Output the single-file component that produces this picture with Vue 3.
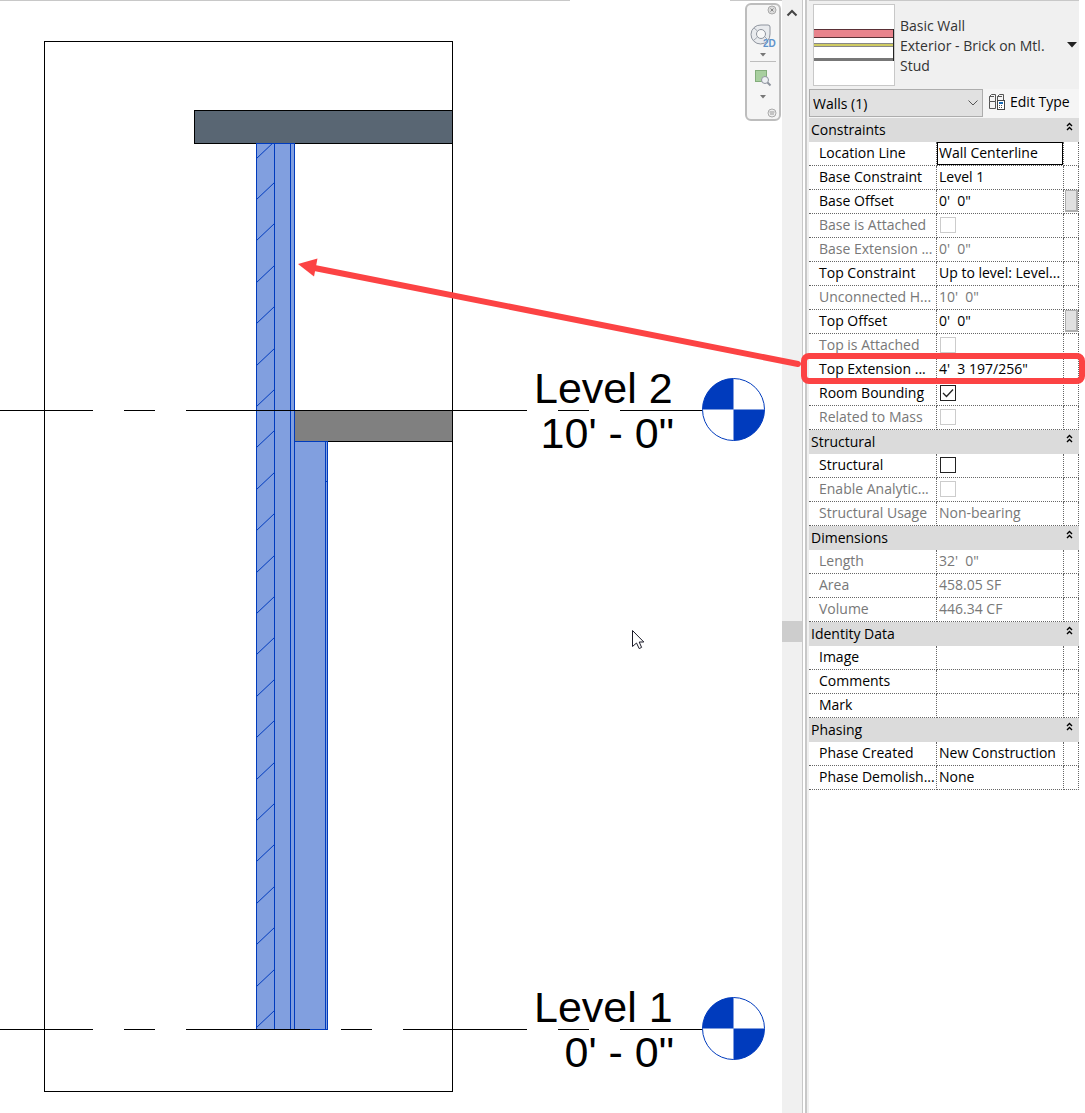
<script setup>
import { ref } from 'vue'

const filter = ref('walls')

const sections = ref([
  {
    title: 'Constraints',
    rows: [
      { id: 'location', label: 'Location Line', value: 'Wall Centerline', type: 'text', active: true },
      { id: 'base', label: 'Base Constraint', value: 'Level 1' },
      { id: 'base-offset', label: 'Base Offset', value: '0\'  0"', type: 'text', picker: true },
      { id: 'base-attached', label: 'Base is Attached', value: false, type: 'check', disabled: true },
      { id: 'base-ext', label: 'Base Extension ...', value: '0\'  0"', disabled: true },
      { id: 'top', label: 'Top Constraint', value: 'Up to level: Level...' },
      { id: 'height', label: 'Unconnected H...', value: '10\'  0"', disabled: true },
      { id: 'top-offset', label: 'Top Offset', value: '0\'  0"', type: 'text', picker: true },
      { id: 'top-attached', label: 'Top is Attached', value: false, type: 'check', disabled: true },
      { id: 'top-ext', label: 'Top Extension ...', value: '4\'  3 197/256"', marked: true },
      { id: 'room', label: 'Room Bounding', value: true, type: 'check' },
      { id: 'mass', label: 'Related to Mass', value: false, type: 'check', disabled: true }
    ]
  },
  {
    title: 'Structural',
    rows: [
      { id: 'structural', label: 'Structural', value: false, type: 'check' },
      { id: 'analytical', label: 'Enable Analytic...', value: false, type: 'check', disabled: true },
      { id: 'usage', label: 'Structural Usage', value: 'Non-bearing', disabled: true }
    ]
  },
  {
    title: 'Dimensions',
    rows: [
      { id: 'length', label: 'Length', value: '32\'  0"', disabled: true },
      { id: 'area', label: 'Area', value: '458.05 SF', disabled: true },
      { id: 'volume', label: 'Volume', value: '446.34 CF', disabled: true }
    ]
  },
  {
    title: 'Identity Data',
    rows: [
      { id: 'image', label: 'Image', value: '' },
      { id: 'comments', label: 'Comments', value: '', type: 'text' },
      { id: 'mark', label: 'Mark', value: '', type: 'text' }
    ]
  },
  {
    title: 'Phasing',
    rows: [
      { id: 'created', label: 'Phase Created', value: 'New Construction' },
      { id: 'demolished', label: 'Phase Demolish...', value: 'None' }
    ]
  }
])

const levels = [
  { name: 'Level 2', elevation: '10\' - 0"', y: 410 },
  { name: 'Level 1', elevation: '0\' - 0"', y: 1029 }
]

// brick hatch, one stroke every 41.4 units down the wall
const hatch = Array.from({ length: 22 }, (_, i) => Math.round(140.6 + i * 41.4))
</script>

<template>
  <div class="workspace">
    <main class="view">
      <svg class="drawing" viewBox="0 0 782 1113">
        <defs>
          <clipPath id="brick"><rect x="256" y="143" width="19" height="886" /></clipPath>
        </defs>
        <path d="M0 .5H570M730 .5H782" stroke="#c8c8c8" />

        <!-- wall layers -->
        <rect x="256" y="143" width="39" height="886" fill="#819fdf" />
        <rect x="295" y="441" width="33" height="588" fill="#819fdf" />
        <g clip-path="url(#brick)" stroke="#003bbd">
          <line v-for="y in hatch" :key="y" x1="256" :y1="y + 18" x2="275" :y2="y" />
        </g>
        <path
          d="M256.5 143V1029M274.5 143V1029M290.5 143V1029M294.5 143V1029M325.5 441V1029M327.5 441V1029"
          stroke="#003bbd"
        />

        <!-- roof and floor -->
        <rect x="194.5" y="110.5" width="258" height="33" fill="#596673" stroke="#000" />
        <path d="M256 143.5H295" stroke="#003bbd" />
        <rect x="295" y="410.5" width="157.5" height="31" fill="#808080" />
        <path d="M328 441.5H452M295 410.5H452" stroke="#000" />
        <path d="M294.5 410V441.5H328M310 1029.5H328M326 481.5H328" fill="none" stroke="#003bbd" />

        <!-- crop region -->
        <rect x="44.5" y="41.5" width="408" height="1050" fill="none" stroke="#000" />

        <g v-for="level in levels" :key="level.name">
          <path
            :transform="`translate(0 ${level.y})`"
            d="M0 .5H93M124 .5H155M186 .5H310M341 .5H372M403 .5H527M558 .5H589M620 .5H702"
            stroke="#000"
          />
          <g :transform="`translate(733.5 ${level.y - 0.5})`">
            <circle r="31" fill="#fff" stroke="#003bbd" />
            <path d="M0 0V-31A31 31 0 0 0-31 0ZM0 0V31A31 31 0 0 0 31 0Z" fill="#003bbd" />
          </g>
          <text class="level-text" x="534" :y="level.y - 7">{{ level.name }}</text>
          <text class="level-text" x="674" :y="level.y + 38" text-anchor="end">{{ level.elevation }}</text>
        </g>

        <!-- cursor -->
        <path
          d="M632.5 630.5V646.5L636.5 643L639.2 648.6L641.6 647.4L639.2 642H643.8Z"
          fill="#fff"
          stroke="#1b1b28"
        />

        <!-- callout arrow -->
        <path d="M312 267.500L798 364" stroke="#fc4344" stroke-width="6" stroke-linecap="round" />
        <path d="M298 264L317.500 258.500L314 276.500Z" fill="#fc4344" />
      </svg>

      <nav class="navbar" aria-label="Navigation bar">
        <button type="button" aria-label="Close">
          <svg width="10" height="10" viewBox="0 0 10 10">
            <circle cx="5" cy="5" r="4" fill="#ddd" stroke="#aaa" />
            <path d="M3.500 3.500l3 3m0-3l-3 3" stroke="#888" />
          </svg>
        </button>
        <button type="button" class="wheel" aria-label="Steering wheel 2D">
          <svg width="26" height="26" viewBox="0 0 26 26">
            <path d="M11 2H18Q20 2 20 4V11A9.500 9.500 0 1 1 11 2Z" fill="#e9ebee" stroke="#8e949e" />
            <circle cx="11" cy="11" r="4.500" fill="#f8f8f8" stroke="#8e949e" />
            <path d="M4 5l3.500 3M15 14l2 2M4 17l3.500-3" stroke="#a5aab3" />
            <text class="wheel-text" x="13" y="24">2D</text>
          </svg>
          <svg width="6" height="4" viewBox="0 0 6 4"><path d="M0 0H6L3 3.500Z" fill="#777" /></svg>
        </button>
        <button type="button" class="zoom" aria-label="Zoom region">
          <svg width="18" height="18" viewBox="0 0 18 18">
            <rect x="1.500" y="1.500" width="11" height="11" fill="#a8cf9f" stroke="#83ad7b" />
            <circle cx="11" cy="11" r="3.500" fill="#eef1f4" stroke="#8e949e" />
            <path d="M13.500 13.500L16.500 16.500" stroke="#8e949e" stroke-width="2" />
          </svg>
          <svg width="6" height="4" viewBox="0 0 6 4"><path d="M0 0H6L3 3.500Z" fill="#777" /></svg>
        </button>
        <button type="button" aria-label="Options">
          <svg width="10" height="10" viewBox="0 0 10 10">
            <circle cx="5" cy="5" r="4" fill="#eee" stroke="#aaa" />
            <path d="M2.500 4H7.500M3 6H7" stroke="#999" />
          </svg>
        </button>
      </nav>
    </main>

    <div class="scrollbar">
      <button type="button" class="scroll-up" aria-label="Scroll up">
        <svg width="12" height="8" viewBox="0 0 12 8">
          <path d="M1.500 6.500L6 2L10.500 6.500" fill="none" stroke="#444" stroke-width="2" />
        </svg>
      </button>
      <div class="track-before"></div>
      <div class="thumb"></div>
      <div class="track-after"></div>
    </div>
    <div class="splitter"></div>

    <aside class="properties">
      <button type="button" class="type-selector">
        <svg class="preview" width="82" height="82" viewBox="0 0 82 82">
          <rect x=".5" y=".5" width="81" height="81" fill="#fff" stroke="#c8c8c8" />
          <rect x="1" y="25" width="80" height="9" fill="#e8838c" />
          <path d="M1 25.500H81M1 33.500H81" stroke="#5a3036" />
          <path d="M1 39.500H81M1 42.500H81" stroke="#888" />
          <path d="M1 41H81" stroke="#cfcb62" stroke-width="2" />
          <path d="M1 55.500H81" stroke="#777" stroke-width="3" />
          <path d="M80.500 25V57" stroke="#222" />
        </svg>
        <span class="type-name">Basic Wall<br />Exterior - Brick on Mtl.<br />Stud</span>
        <svg width="10" height="6" viewBox="0 0 10 6"><path d="M0 0H10L5 5.500Z" fill="#222" /></svg>
      </button>

      <div class="filter-row">
        <div class="filter">
          <select v-model="filter" aria-label="Element filter">
            <option value="walls">Walls (1)</option>
          </select>
          <svg class="chevron" width="12" height="8" viewBox="0 0 12 8">
            <path d="M1.500 1.500L6 6L10.500 1.500" fill="none" stroke="#555" />
          </svg>
        </div>
        <button type="button" class="edit-type">
          <svg width="17" height="17" viewBox="0 0 17 17">
            <path
              d="M2.500 1.500H6.500V8.500H.5V3.500ZM10.500 1.500H14.500V7.500H8.500V3.500ZM.5 8.500V15.500H6.500V8.500M.5 3.500H5M8.500 3.500H13"
              fill="none"
              stroke="#555"
            />
            <rect x="8.500" y="7.500" width="7" height="9" fill="#fff" stroke="#444" />
            <rect x="10" y="9" width="4" height="2" fill="#1769b5" />
            <path d="M10 12.500H14M10 14.500H14" stroke="#555" stroke-dasharray="1 1" />
          </svg>
          Edit Type
        </button>
      </div>

      <table class="grid">
        <colgroup>
          <col class="col-name" />
          <col />
          <col class="col-picker" />
        </colgroup>
        <tbody v-for="section in sections" :key="section.title">
          <tr class="section">
            <th colspan="2" scope="rowgroup">{{ section.title }}</th>
            <td>
              <button type="button" :aria-label="`Collapse ${section.title}`">
                <svg width="7" height="9" viewBox="0 0 7 9">
                  <path d="M1 4L3.500 1.500L6 4M1 8L3.500 5.500L6 8" fill="none" stroke="#000" stroke-width="1.400" />
                </svg>
              </button>
            </td>
          </tr>
          <tr v-for="row in section.rows" :key="row.id" :class="{ disabled: row.disabled, marked: row.marked }">
            <th scope="row">
              <label v-if="row.type" :for="row.id">{{ row.label }}</label>
              <template v-else>{{ row.label }}</template>
              <span v-if="row.marked" class="marker"></span>
            </th>
            <td>
              <input
                v-if="row.type === 'check'"
                :id="row.id"
                v-model="row.value"
                type="checkbox"
                :disabled="row.disabled"
              />
              <input
                v-else-if="row.type === 'text'"
                :id="row.id"
                v-model="row.value"
                type="text"
                :class="{ active: row.active }"
              />
              <template v-else>{{ row.value }}</template>
            </td>
            <td>
              <button v-if="row.picker" type="button" class="picker" :aria-label="`Associate ${row.label}`"></button>
            </td>
          </tr>
        </tbody>
      </table>
    </aside>
  </div>
</template>

<style>
body {
  margin: 0;
  background: #fff;
}
</style>

<style scoped>
.workspace {
  display: flex;
  min-height: 100vh;
  font-family: "Open Sans", "Noto Sans", sans-serif;
  font-size: 14px;
  color: #000;
}

button,
input,
select {
  margin: 0;
  padding: 0;
  border: 0;
  background: none;
  font: inherit;
  color: inherit;
  box-sizing: border-box;
}

svg {
  display: block;
  flex: none;
}

.view {
  position: relative;
  z-index: 1;
  flex: 1;
  min-width: 0;
}

.drawing {
  width: 100%;
  height: auto;
  overflow: visible;
}

.level-text {
  font-family: "Liberation Sans", Arial, sans-serif;
  font-size: 43px;
}

.navbar {
  position: absolute;
  top: 3px;
  right: 1px;
  display: flex;
  flex-direction: column;
  align-items: center;
  box-sizing: border-box;
  width: 36px;
  height: 118px;
  border: 2px solid #bdbdbd;
  border-radius: 6px;
  background: #f5f5f5;
}

.navbar > button:first-child,
.navbar > button:last-child {
  align-self: flex-end;
  margin-right: 2px;
}

.navbar > button:last-child {
  margin-top: auto;
  margin-bottom: 1px;
}

.wheel,
.zoom {
  display: flex;
  flex-direction: column;
  align-items: center;
}

.wheel {
  gap: 4px;
  margin-top: 8px;
  padding-bottom: 4px;
  border-bottom: 1px solid #bdbdbd;
}

.zoom {
  gap: 8px;
  margin-top: 7px;
}

.wheel-text {
  font-family: "Liberation Sans", Arial, sans-serif;
  font-size: 10px;
  font-weight: bold;
  fill: #5f93cb;
}

.scrollbar {
  display: flex;
  flex-direction: column;
  flex: 0 0 20px;
  background: #f0f0f0;
}

.scroll-up {
  display: flex;
  justify-content: center;
  padding: 9px 0 5px;
}

.track-before {
  flex: 599;
}

.thumb {
  height: 21px;
  background: #cdcdcd;
}

.track-after {
  flex: 471;
}

.splitter {
  flex: 0 0 2px;
  border-left: 1px solid #c8c8c8;
  border-right: 2px solid #c8c8c8;
}

.properties {
  flex: 0 0 270px;
  padding-right: 6px;
  border-left: 2px solid #f0f0f0;
}

.type-selector {
  display: flex;
  align-items: center;
  width: 100%;
  height: 89px;
  padding: 0 2px 0 4px;
  gap: 5px;
  border-top: 1px solid #c8c8c8;
  background: #f0f0f0;
  color: #333;
  text-align: left;
}

.type-name {
  flex: 1;
  padding-top: 2px;
  line-height: 20px;
  white-space: nowrap;
}

.filter-row {
  display: flex;
  height: 29px;
  background: #f5f5f5;
}

.filter {
  position: relative;
  flex: 1;
}

.filter select {
  appearance: none;
  width: 100%;
  height: 28px;
  padding-left: 3px;
  border: 1px solid #adadad;
  background: #e1e1e1;
}

.chevron {
  position: absolute;
  top: 10px;
  right: 4px;
  pointer-events: none;
}

.edit-type {
  display: flex;
  align-items: center;
  gap: 4px;
  flex: 0 0 96px;
  padding: 0 0 4px 6px;
  white-space: nowrap;
}

.grid {
  width: 100%;
  table-layout: fixed;
  border-collapse: separate;
  border-spacing: 0;
}

.col-name {
  width: 128px;
}

.col-picker {
  width: 15px;
}

.grid th,
.grid td {
  box-sizing: border-box;
  height: 24px;
  padding: 0 0 0 2px;
  border-right: 1px dotted #666;
  border-bottom: 1px dotted #666;
  font-weight: normal;
  line-height: 21px;
  text-align: left;
  vertical-align: top;
  white-space: pre;
  overflow: hidden;
}

.grid th {
  padding-left: 10px;
}

.grid td:last-child {
  padding: 0;
}

.grid .section th,
.grid .section td {
  padding-left: 2px;
  border: 0;
  background: #dbdbdb;
  line-height: 24px;
}

.section button {
  display: block;
  padding-top: 4px;
}

.disabled {
  color: #787878;
}

input[type="text"] {
  display: block;
  width: 100%;
  height: 23px;
  padding-bottom: 2px;
}

input.active {
  width: calc(100% + 2px);
  margin-left: -2px;
  padding-left: 1px;
  border: 1px solid #000;
}

input[type="checkbox"] {
  appearance: none;
  display: block;
  width: 16px;
  height: 16px;
  margin: 3px 0 0 1px;
  border: 1px solid #222;
  background: #fff;
}

input[type="checkbox"]:disabled {
  border-color: #ccc;
}

input[type="checkbox"]:checked {
  background: url("data:image/svg+xml,%3Csvg xmlns='http://www.w3.org/2000/svg' viewBox='0 0 14 14'%3E%3Cpath d='M2 7l3.500 3.500L12 3.500' fill='none' stroke='%23222' stroke-width='1.300'/%3E%3C/svg%3E");
}

.picker {
  display: block;
  width: 13px;
  height: 22px;
  margin-left: 1px;
  border: 1px solid #adadad;
  border-right-width: 2px;
  border-bottom-width: 2px;
  background: #e1e1e1;
}

.marked {
  position: relative;
}

.marker {
  position: absolute;
  inset: -5px -6px -2px -8px;
  border: 6px solid #fc4344;
  border-radius: 8px;
  pointer-events: none;
}
</style>
